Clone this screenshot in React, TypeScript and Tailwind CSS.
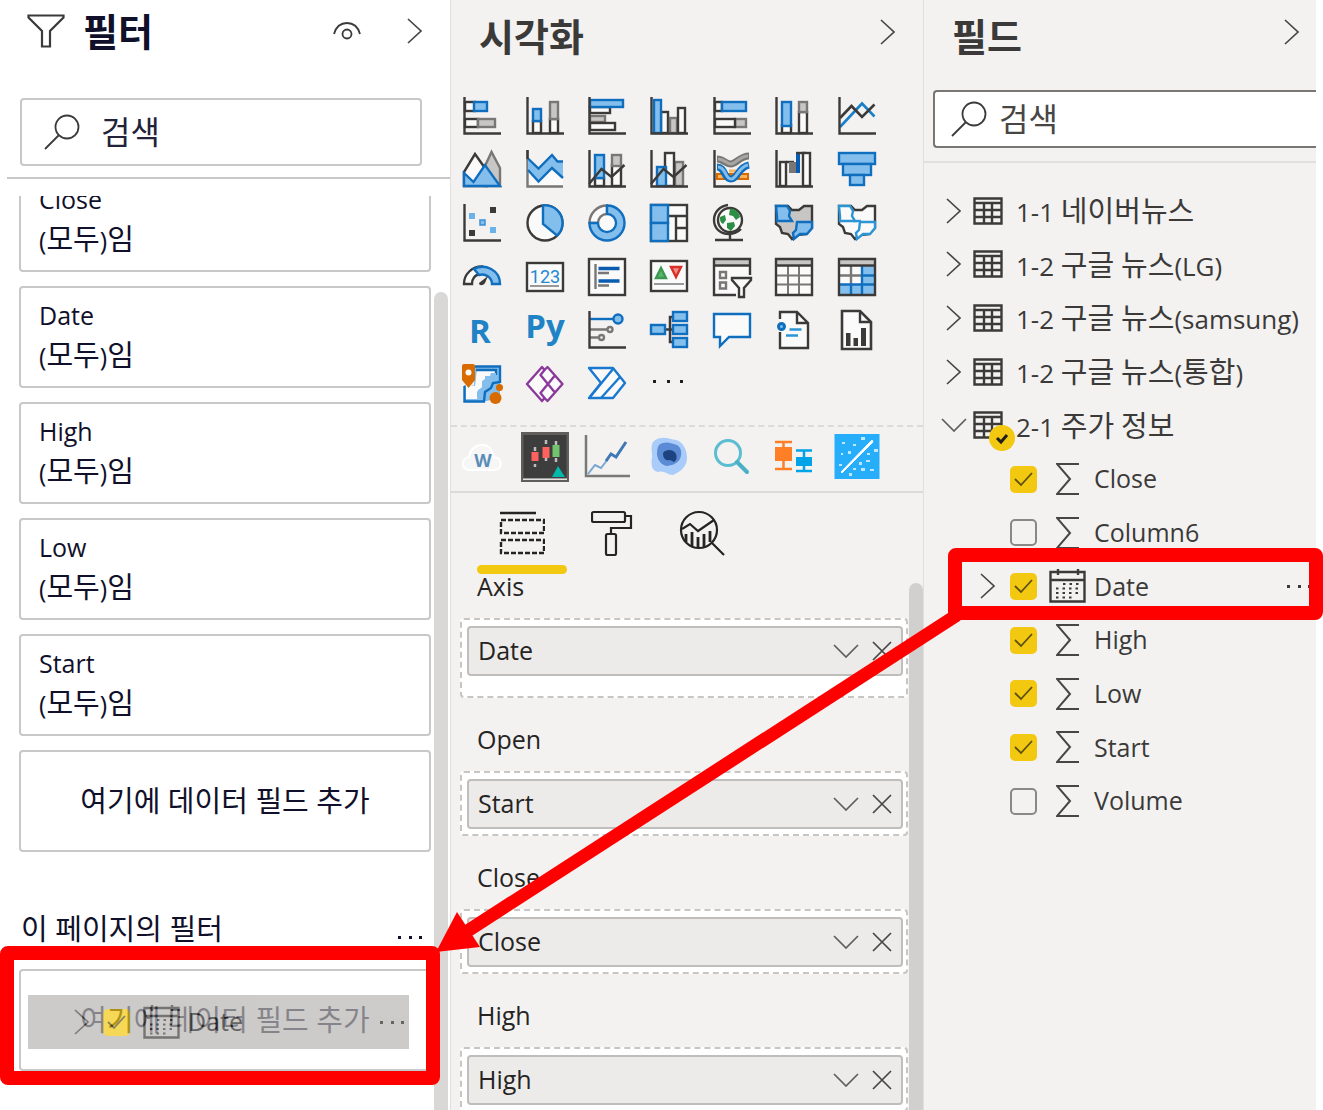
import React, { ReactNode } from 'react';

const DARK = '#3b3a39';
const GRAY = '#797775';
const GRAY_FILL = '#c8c6c4';
const BLUE = '#106ebe';
const BLUE_FILL = '#83beec';
const WHITE = '#fafafa';

interface IconProps {
  children?: ReactNode;
}

const Glyph = ({ children }: IconProps) => (
  <svg
    width="40"
    height="40"
    viewBox="0 0 40 40"
    fill="none"
    strokeWidth="2.400"
    aria-hidden="true"
    className="shrink-0 overflow-visible"
  >
    {children}
  </svg>
);

const Axis = () => <path d="M2.5 1v36.5H39" stroke={DARK} />;

interface BarProps {
  x: number;
  y: number;
  w: number;
  h: number;
  tone: 'blue' | 'gray' | 'white';
}

const tones = {
  blue: { stroke: BLUE, fill: BLUE_FILL },
  gray: { stroke: GRAY, fill: GRAY_FILL },
  white: { stroke: DARK, fill: WHITE },
};

const Bar = ({ x, y, w, h, tone }: BarProps) => <rect x={x} y={y} width={w} height={h} {...tones[tone]} />;

const visuals: { name: string; icon: ReactNode }[] = [
  {
    name: 'Stacked bar chart',
    icon: (
      <Glyph>
        <Bar x={3} y={6} w={10} h={9} tone="white" />
        <Bar x={12} y={6} w={13} h={9} tone="blue" />
        <Bar x={3} y={23} w={13} h={8} tone="white" />
        <Bar x={16} y={23} w={17} h={8} tone="gray" />
        <Axis />
      </Glyph>
    ),
  },
  {
    name: 'Stacked column chart',
    icon: (
      <Glyph>
        <Bar x={8} y={25} w={8} h={12} tone="white" />
        <Bar x={8} y={13} w={8} h={12} tone="blue" />
        <Bar x={25} y={23} w={8} h={14} tone="white" />
        <Bar x={25} y={6} w={8} h={17} tone="gray" />
        <Axis />
      </Glyph>
    ),
  },
  {
    name: 'Clustered bar chart',
    icon: (
      <Glyph>
        <Bar x={3} y={11} w={20} h={6} tone="white" />
        <Bar x={3} y={20} w={15} h={6} tone="gray" />
        <Bar x={3} y={27} w={25} h={7} tone="white" />
        <Bar x={3} y={4} w={33} h={7} tone="blue" />
        <Axis />
      </Glyph>
    ),
  },
  {
    name: 'Clustered column chart',
    icon: (
      <Glyph>
        <Bar x={12} y={16} w={7} h={21} tone="white" />
        <Bar x={21} y={22} w={7} h={15} tone="gray" />
        <Bar x={29} y={12} w={7} h={25} tone="white" />
        <Bar x={5} y={4} w={7} h={33} tone="blue" />
        <Axis />
      </Glyph>
    ),
  },
  {
    name: '100% stacked bar chart',
    icon: (
      <Glyph>
        <Bar x={3} y={6} w={7} h={9} tone="white" />
        <Bar x={10} y={6} w={24} h={9} tone="blue" />
        <Bar x={23} y={23} w={11} h={8} tone="gray" />
        <Bar x={3} y={23} w={20} h={8} tone="white" />
        <Axis />
      </Glyph>
    ),
  },
  {
    name: '100% stacked column chart',
    icon: (
      <Glyph>
        <Bar x={8} y={29} w={9} h={8} tone="white" />
        <Bar x={8} y={6} w={9} h={24} tone="blue" />
        <Bar x={25} y={16} w={8} h={21} tone="white" />
        <Bar x={25} y={6} w={8} h={10} tone="gray" />
        <Axis />
      </Glyph>
    ),
  },
  {
    name: 'Line chart',
    icon: (
      <Glyph>
        <path d="M3 31 25 7.5l12.500 13" stroke="#1a7fc9" strokeWidth="2.600" />
        <path d="m3 22 11.500-12L25 21 37.500 8.500" stroke={DARK} strokeWidth="2.600" />
        <Axis />
      </Glyph>
    ),
  },
  {
    name: 'Area chart',
    icon: (
      <Glyph>
        <path d="M2 37V23L13 5l12 17v15z" stroke={DARK} fill={WHITE} />
        <path d="M23 17 29.500 3 38 19v18H23z" stroke={GRAY} fill={GRAY_FILL} />
        <path d="M2 37V24l9.500 9L23 16l15 21z" stroke={BLUE} fill={BLUE_FILL} />
      </Glyph>
    ),
  },
  {
    name: 'Stacked area chart',
    icon: (
      <Glyph>
        <path d="M3 20v17h35V24z" fill={WHITE} />
        <path d="M2.500 1v36.500H38" stroke={GRAY} />
        <path d="M3 9.500l10.500 10L27 6l5.500 6.500H38V29L27 19 13.500 32.500 3 21z" fill={BLUE_FILL} />
        <path d="m3 9.500 10.500 10L27 6l5.500 6.500H38M38 29 27 19 13.500 32.500 3 21" stroke={BLUE} />
        <path d="M2.500 1v9" stroke={DARK} />
      </Glyph>
    ),
  },
  {
    name: 'Line and stacked column chart',
    icon: (
      <Glyph>
        <Bar x={8} y={29} w={9} h={8} tone="white" />
        <Bar x={8} y={6} w={9} h={23} tone="blue" />
        <Bar x={25} y={16} w={9} h={21} tone="white" />
        <Bar x={25} y={6} w={9} h={11} tone="gray" />
        <Axis />
        <path d="m2 35 12.500-15 10 8 13-12" stroke={DARK} />
      </Glyph>
    ),
  },
  {
    name: 'Line and clustered column chart',
    icon: (
      <Glyph>
        <Bar x={26} y={13} w={8} h={24} tone="gray" />
        <Bar x={16} y={4} w={9} h={33} tone="white" />
        <Bar x={8} y={18} w={9} h={19} tone="blue" />
        <Axis />
        <path d="m2 35 12.500-15 10 8 13-12" stroke={DARK} />
      </Glyph>
    ),
  },
  {
    name: 'Ribbon chart',
    icon: (
      <Glyph>
        <path d="M4 24h33v7H4z" fill="#d86b00" />
        <path d="M6 27.500h5M17 22h7M28 27.500h7" stroke="#ffb35c" strokeWidth="3" />
        <path d="M5 10c6 0 9 5 14 5s9-8 18-8" stroke={GRAY} strokeWidth="7" />
        <path d="M6 10c6 0 9 5 13 5s9-8 17-8" stroke="#a8a6a4" strokeWidth="3" />
        <path d="M5 18c8 0 7 12 14 12s7-12 18-14" stroke={BLUE} strokeWidth="7" />
        <path d="M6 18c8 0 7 12 13 12s7-12 17-14" stroke={BLUE_FILL} strokeWidth="3" />
        <Axis />
      </Glyph>
    ),
  },
  {
    name: 'Waterfall chart',
    icon: (
      <Glyph>
        <Bar x={6} y={13} w={6} h={24} tone="white" />
        <path d="M12 13h8" stroke={DARK} />
        <rect x="15" y="13" width="7" height="11" fill={GRAY} />
        <rect x="22" y="4" width="4" height="20" fill="#0a5cb0" />
        <path d="M22 4h10" stroke={DARK} />
        <Bar x={29} y={4} w={7} h={33} tone="white" />
        <Axis />
      </Glyph>
    ),
  },
  {
    name: 'Funnel',
    icon: (
      <Glyph>
        <Bar x={2} y={4} w={36} h={11} tone="blue" />
        <Bar x={6} y={15} w={28} h={11} tone="blue" />
        <Bar x={13} y={26} w={14} h={10} tone="blue" />
      </Glyph>
    ),
  },
  {
    name: 'Scatter chart',
    icon: (
      <Glyph>
        <path d="M2.500 1v36.500H39" stroke={DARK} />
        <path d="M28 4h6v6h-6zM7 27h6v6H7z" fill={DARK} />
        <path d="M7 10h6v6H7zM28 24h6v6h-6z" fill="#6cb3ec" />
        <path d="M18 17h5v5h-5z" fill={BLUE_FILL} stroke="#3a8fd6" strokeWidth="1.500" />
      </Glyph>
    ),
  },
  {
    name: 'Pie chart',
    icon: (
      <Glyph>
        <circle cx="20" cy="20" r="17.500" stroke={DARK} fill={WHITE} />
        <path d="M18 2.500c11-1 19.500 7 19.500 17.500 0 5-2 9.500-5.500 12.500L18 21z" stroke={BLUE} fill={BLUE_FILL} />
      </Glyph>
    ),
  },
  {
    name: 'Donut chart',
    icon: (
      <Glyph>
        <path d="M20 2.500A17.500 17.500 0 0 0 2.500 20H11a9 9 0 0 1 9-9z" stroke={GRAY} fill={WHITE} />
        <path d="M20 2.500A17.500 17.500 0 1 1 2.500 20H11a9 9 0 1 0 9-9z" stroke={BLUE} fill={BLUE_FILL} />
        <circle cx="20" cy="20" r="7.500" fill={WHITE} />
      </Glyph>
    ),
  },
  {
    name: 'Treemap',
    icon: (
      <Glyph>
        <rect x="2" y="2" width="36" height="36" stroke={DARK} fill={WHITE} />
        <path d="M19 13h19M27 13v25M27 25h11" stroke={DARK} />
        <Bar x={2} y={2} w={17} h={18} tone="blue" />
        <Bar x={2} y={20} w={17} h={18} tone="blue" />
      </Glyph>
    ),
  },
  {
    name: 'Map',
    icon: (
      <Glyph>
        <circle cx="18" cy="17" r="12" stroke={DARK} fill={WHITE} />
        <path d="M18 6c5-1 9 3 10 8l-4 3-3-4-4-1zM8 14l5-2 1 5-3 4c-3-2-3-4-3-7zM15 20l7-1 1 4-4 5-4-3z" fill="#2b8f45" />
        <path d="M16 2C8 3 2 9 2 17c0 9 7 14 15 14 5 0 9-2 12-5M18 32v5M3 37h28" stroke={DARK} />
      </Glyph>
    ),
  },
  {
    name: 'Filled map',
    icon: (
      <Glyph>
        <path d="M2 3h12l4 4h7l5-4h8v22l-6 6-9 1-5 4-4-5-6-1-2-6-4-3z" stroke={DARK} fill={GRAY_FILL} />
        <path d="M2 3h11l3 5-1 5 3 5H3V13z" stroke={BLUE} fill={BLUE_FILL} />
        <path d="M23 19h15v6l-5 6h-7l-6 5-1-6 3-3z" stroke={BLUE} fill={BLUE_FILL} />
      </Glyph>
    ),
  },
  {
    name: 'Shape map',
    icon: (
      <Glyph>
        <path d="M2 3h12l4 4h7l5-4h8v22l-6 6-9 1-5 4-4-5-6-1-2-6-4-3z" stroke={DARK} fill={WHITE} />
        <path d="M2 3h11l3 5-1 5 3 5H3V13z" stroke="#2b95d6" fill={WHITE} />
        <path d="M23 19h15v6l-5 6h-7l-6 5-1-6 3-3z" stroke="#2b95d6" fill={WHITE} />
        <path d="M16 18h8" stroke="#2b95d6" />
      </Glyph>
    ),
  },
  {
    name: 'Gauge',
    icon: (
      <Glyph>
        <path d="M2 27C2 17 10 9.500 20 9.500l-2 8c-5 0-8 4-8 9.500z" stroke={DARK} fill={WHITE} />
        <path d="M12 12c11-6 26 1 26 15h-8c0-6-6-11-13-9z" stroke={BLUE} fill={BLUE_FILL} />
        <path d="M17 26 26 19l-3 7c-2 3-6 3-6 0z" fill={DARK} />
      </Glyph>
    ),
  },
  {
    name: 'Card',
    icon: (
      <Glyph>
        <rect x="2" y="6" width="36" height="28" stroke={DARK} fill={WHITE} />
        <text x="20" y="26" fill="#2489d0" textAnchor="middle" className="font-[Roboto] text-[18px]">
          123
        </text>
        <path d="M5 29h29" stroke={GRAY} strokeWidth="1.500" />
      </Glyph>
    ),
  },
  {
    name: 'Multi-row card',
    icon: (
      <Glyph>
        <rect x="2" y="2" width="36" height="36" stroke={DARK} fill={WHITE} />
        <path d="M8.500 7v25M11 16h11M11 28.500h11" stroke={GRAY} />
        <path d="M11.500 11.500h21M11.500 24h21" stroke="#0a5cb0" strokeWidth="3.500" />
      </Glyph>
    ),
  },
  {
    name: 'KPI',
    icon: (
      <Glyph>
        <rect x="2" y="4" width="36" height="30" stroke={DARK} fill={WHITE} />
        <path d="m12 11 5 10H7z" fill="#5fb36d" stroke="#3c9a50" />
        <path d="m27 20-5-10h10z" fill="#f28b85" stroke="#d92f28" />
        <path d="M5 27h30" stroke={GRAY} strokeWidth="1.500" />
      </Glyph>
    ),
  },
  {
    name: 'Slicer',
    icon: (
      <Glyph>
        <path d="M2 2h36v15L24 38H2z" fill={WHITE} />
        <path d="M2 5h36" stroke={GRAY_FILL} strokeWidth="5" />
        <path d="M38 18V2H2v36h22M2 8.500h36" stroke={DARK} />
        <path d="M8 15h6v6H8zM8 25.500h6v6H8z" stroke={GRAY} />
        <path d="M20 21h19v2l-7 8v9h-5v-9l-7-8z" stroke={DARK} fill={WHITE} />
      </Glyph>
    ),
  },
  {
    name: 'Table',
    icon: (
      <Glyph>
        <rect x="2" y="2" width="36" height="36" fill={WHITE} />
        <path d="M2 5h36" stroke={GRAY_FILL} strokeWidth="5" />
        <path d="M14 9v29M25 9v29M2 18.500h36M2 27.500h36" stroke={GRAY} strokeWidth="2" />
        <path d="M2 2h36v36H2zM2 8.500h36" stroke={DARK} />
      </Glyph>
    ),
  },
  {
    name: 'Matrix',
    icon: (
      <Glyph>
        <rect x="2" y="2" width="36" height="36" fill={WHITE} />
        <path d="M2 5h36" stroke={GRAY_FILL} strokeWidth="5" />
        <path d="M14 9v18M2 18.500h23" stroke={GRAY} />
        <path d="M25 9h13v29H2V27.500h23z" fill={BLUE_FILL} />
        <path d="M25 9v29M14 27.500V38M2 27.500h36M25 18.500h13" stroke={BLUE} />
        <path d="M2 2h36v36H2zM2 8.500h36" stroke={DARK} />
      </Glyph>
    ),
  },
  {
    name: 'R script visual',
    icon: (
      <Glyph>
        <text x="18" y="33" fill="#1f83c5" textAnchor="middle" className="font-['Open_Sans'] text-[33px] font-bold">
          R
        </text>
      </Glyph>
    ),
  },
  {
    name: 'Python visual',
    icon: (
      <Glyph>
        <text x="20" y="28" fill="#1f83c5" textAnchor="middle" className="font-['Open_Sans'] text-[33px] font-bold">
          Py
        </text>
      </Glyph>
    ),
  },
  {
    name: 'Key influencers',
    icon: (
      <Glyph>
        <path d="M3 19.500h18M3 27.500h9" stroke={GRAY} />
        <circle cx="23" cy="19.500" r="2.500" stroke={GRAY} />
        <circle cx="14.500" cy="27.500" r="2.500" stroke={GRAY} />
        <path d="M3 9h23" stroke={BLUE} />
        <circle cx="31" cy="9" r="4.500" stroke={BLUE} fill={BLUE_FILL} />
        <Axis />
      </Glyph>
    ),
  },
  {
    name: 'Decomposition tree',
    icon: (
      <Glyph>
        <path d="M16 19.500h8M25 7h-4v25h4" stroke={DARK} strokeWidth="2.500" />
        <Bar x={2} y={15} w={14} h={9} tone="blue" />
        <Bar x={24} y={2} w={14} h={9} tone="blue" />
        <Bar x={24} y={15} w={14} h={9} tone="blue" />
        <Bar x={24} y={28} w={14} h={9} tone="blue" />
      </Glyph>
    ),
  },
  {
    name: 'Q&A',
    icon: (
      <Glyph>
        <path d="M2 4h36v23H17l-9 9v-9H2z" stroke={BLUE} fill={WHITE} />
      </Glyph>
    ),
  },
  {
    name: 'Smart narrative',
    icon: (
      <Glyph>
        <path d="M6 2h17l10 11v25H6z" fill={WHITE} />
        <path d="M6 9V2h17l11 11v25H6V22M23 2v11h11" stroke={DARK} />
        <circle cx="7.500" cy="16.500" r="3" stroke={BLUE} strokeWidth="3" fill={BLUE_FILL} />
        <path d="M15.500 19.500h12M12 25.500h12" stroke="#2b95d6" strokeWidth="2.500" />
      </Glyph>
    ),
  },
  {
    name: 'Paginated report',
    icon: (
      <Glyph>
        <path d="M5 1h18l11 11v27H5z" fill={WHITE} stroke={DARK} strokeWidth="2.600" />
        <path d="M23 1v11h11" stroke={DARK} />
        <path d="M9 23h4.500v13H9zM16.500 28H21v8h-4.500zM24 18h5v18h-5z" fill={DARK} />
      </Glyph>
    ),
  },
  {
    name: 'ArcGIS Maps',
    icon: (
      <Glyph>
        <path d="M13 3h25v30L25 37H2V21h10z" fill={BLUE_FILL} />
        <path d="M15 5h20v6l-6 1-6 2-1 9-6 3-1 9H4V20l9 2z" fill={WHITE} />
        <path d="M13 2.500h25V18l-7 1-2 5-6 4-1 9.500H2.500V22M14 6h20v5" stroke={BLUE} />
        <path d="M23 12h5l1-3h5v7l-5 2-3 5-6 4v6h-5v-5l5-5v-6l3-2z" fill={BLUE_FILL} />
        <path d="M0 2q0-2 2-2h9q2 0 2 2v14l-6.500 8L0 16z" fill="#d86b00" />
        <circle cx="6.500" cy="8.500" r="3" fill={WHITE} />
        <circle cx="33.500" cy="34" r="6" fill="#d86b00" />
        <circle cx="37.500" cy="23.500" r="3.500" fill="#d86b00" />
      </Glyph>
    ),
  },
  {
    name: 'Power Apps',
    icon: (
      <Glyph>
        <path
          d="m22.500 3 15 17-15 17-3-3-2.500 3L2 20 17 3l2.500 3z"
          stroke="#8b3a9c"
          fill={WHITE}
          strokeLinejoin="round"
        />
        <path
          d="m19.500 6-4 5 14 17M19.500 34l-4-5 14-17"
          stroke="#8b3a9c"
          strokeLinejoin="round"
        />
      </Glyph>
    ),
  },
  {
    name: 'Power Automate',
    icon: (
      <Glyph>
        <path d="M2 4h24l12 15-12 15H2l12-15z" stroke="#1a78d0" fill={WHITE} strokeLinejoin="round" />
        <path d="M26 5 3 33M33 13 14 34" stroke="#1a78d0" />
      </Glyph>
    ),
  },
  {
    name: 'More visuals',
    icon: (
      <Glyph>
        <path d="M4 16h3v3H4zM18 16h3v3h-3zM31 16h3v3h-3z" fill="#201f1e" />
      </Glyph>
    ),
  },
];

const LargeGlyph = ({ children }: IconProps) => (
  <svg width="50" height="50" viewBox="0 0 50 50" fill="none" aria-hidden="true" className="shrink-0">
    {children}
  </svg>
);

const customVisuals: { name: string; icon: ReactNode }[] = [
  {
    name: 'Word cloud',
    icon: (
      <LargeGlyph>
        <path d="M12 38c-8 0-8-12 0-13 1-8 8-13 14-12 6-1 10 7 11 12 9 1 9 13 0 13z" fill="#f6f6f6" stroke="#fff" strokeWidth="2" />
        <text x="26" y="35" fill="#5b8db8" textAnchor="middle" className="font-['Open_Sans'] text-[18px] font-bold">
          W
        </text>
      </LargeGlyph>
    ),
  },
  {
    name: 'Candlestick',
    icon: (
      <LargeGlyph>
        <path d="M1 0h48v50H1z" fill="#605e5c" />
        <path d="M3.500 3h43v43h-43z" fill="#3d3d3d" />
        <path d="M3 46.500h44v1.500H3z" fill="#e1dfdd" />
        <path d="M15 15v20M26 8v24M36 9v23" stroke="#bdbdbd" strokeWidth="2.500" strokeDasharray="4 13 4" />
        <path d="M11.500 20h7v9h-7zM22.500 15h7v11h-7z" fill="#fd625e" />
        <path d="M32.500 13h7v12h-7z" fill="#73c26d" />
        <path d="m38 34 7 11H32z" fill="#01b8aa" />
      </LargeGlyph>
    ),
  },
  {
    name: 'Line with forecast',
    icon: (
      <LargeGlyph>
        <path d="M4 3v41h44" stroke="#797979" strokeWidth="2.500" />
        <path d="m6 42 7-9 6 3 7-9" stroke="#7aa7d2" strokeWidth="2" />
        <path d="m24 29 5-7 5 3 10-15" stroke="#3f78b5" strokeWidth="3" />
      </LargeGlyph>
    ),
  },
  {
    name: 'Density map',
    icon: (
      <LargeGlyph>
        <path d="M10 9c7-6 16-2 22-1 8 2 11 11 11 18 0 9-7 14-14 17-6 0-9-5-15-3-7-1-7-9-6-15 0-6-2-12 2-16z" fill="#a9ccfa" />
        <path d="M15 13c7-5 13-1 18 0 5 3 5 9 3 14-4 6-9 6-13 7-6-1-9-6-10-11 0-4 0-7 2-10z" fill="#5b8bd5" />
        <path d="M19 21c4-5 11-3 13 1 1 3 1 6-2 8l-4-2c-4 1-7-1-7-7z" fill="#1d4480" />
      </LargeGlyph>
    ),
  },
  {
    name: 'Text filter',
    icon: (
      <LargeGlyph>
        <circle cx="21" cy="21" r="12.500" stroke="#5bbdd0" strokeWidth="3" />
        <path d="m30 30 10 10" stroke="#4ab0c5" strokeWidth="4" strokeLinecap="round" />
      </LargeGlyph>
    ),
  },
  {
    name: 'Box and whisker',
    icon: (
      <LargeGlyph>
        <path d="M6 10h17M14.500 10v27M6 37h17" stroke="#ff7f27" strokeWidth="2.500" />
        <path d="M6 15h17v14H6z" fill="#ff7f27" />
        <path d="M27 18.500h16M35 18v21M27 39h16" stroke="#00a2e8" strokeWidth="2.500" />
        <path d="M27 25h16v9H27z" fill="#00a2e8" />
      </LargeGlyph>
    ),
  },
  {
    name: 'Correlation',
    icon: (
      <LargeGlyph>
        <path d="M2.500 2h45v45h-45z" fill="#27aefb" />
        <path d="M9 40 40 8l1 2-31 31z" fill="#fff" stroke="#fff" strokeWidth="1" />
        <path
          d="M10 10h3v2h-3zM21 12h3v2h-3zM29 5h4v3h-4zM16 19h3v3h-3zM9 21h2v2H9zM42 17h4v3h-4zM35 21h3v2h-3zM34 28h4v2h-4zM27 30h3v3h-3zM7 32h3v2H7zM21 36h3v2h-3zM29 36h4v3h-4zM38 37h4v2h-4zM17 41h3v3h-3z"
          fill="#bfe7ff"
        />
      </LargeGlyph>
    ),
  },
];

const ChevronRight = () => (
  <svg width="16" height="26" viewBox="0 0 16 26" fill="none" stroke="#484644" strokeWidth="1.700" aria-hidden="true">
    <path d="m1 1 13 12L1 25" />
  </svg>
);

const ChevronDown = () => (
  <svg width="26" height="14" viewBox="0 0 26 14" fill="none" stroke="#605e5c" strokeWidth="1.700" aria-hidden="true">
    <path d="m1 1 12 12L25 1" />
  </svg>
);

const SearchIcon = () => (
  <svg
    width="36"
    height="36"
    viewBox="0 0 36 36"
    fill="none"
    stroke={DARK}
    strokeWidth="1.800"
    aria-hidden="true"
    className="shrink-0"
  >
    <circle cx="23" cy="13" r="11.500" />
    <path d="M15 21 1 35" />
  </svg>
);

const Dots = () => (
  <svg width="26" height="4" viewBox="0 0 26 4" fill="currentColor" aria-hidden="true">
    <path d="M1 1h3v3H1zM12 1h3v3h-3zM22 1h3v3h-3z" />
  </svg>
);

const TableIcon = () => (
  <svg width="30" height="28" viewBox="0 0 30 28" fill="none" stroke={DARK} strokeWidth="2.400" aria-hidden="true">
    <path d="M1.500 1.500h27v25h-27zM1.500 6h27M1.500 13h27M1.500 20h27M11 6v20M19 6v20" />
  </svg>
);

const SigmaIcon = () => (
  <svg width="24" height="34" viewBox="0 0 24 34" fill="none" stroke="#484644" strokeWidth="2" aria-hidden="true">
    <path d="M23 2H1l13 15L1 32h22" />
  </svg>
);

const CalendarIcon = () => (
  <svg width="37" height="34" viewBox="0 0 37 34" fill="none" stroke={DARK} strokeWidth="2.400" aria-hidden="true">
    <path d="M1.500 3h34v29.500h-34zM1.500 11h34M9 0v6M29 0v6" />
    <path d="M14 15h18M7 19.500h25M7 24h25M7 28.500h18" strokeWidth="2" strokeDasharray="2.500 4" />
  </svg>
);

// Hangul runs sit a step larger than the Latin ones beside them
const MixedText = ({ text }: { text: string }) => (
  <>
    {text.split(/([가-힣]+)/).map((part, i) =>
      /[가-힣]/.test(part) ? (
        <span key={i} className="text-[29px]">
          {part}
        </span>
      ) : (
        part
      ),
    )}
  </>
);

const CheckBox = ({ id, checked, label }: { id: string; checked: boolean; label?: string }) => (
  <span className="relative flex shrink-0">
    <input
      id={id}
      type="checkbox"
      aria-label={label}
      defaultChecked={checked}
      className="peer size-[27px] appearance-none rounded-[5px] border-2 border-[#8a8886] checked:border-[#f2c811] checked:bg-[#f2c811]"
    />
    <svg
      viewBox="0 0 27 27"
      fill="none"
      stroke="#5c5014"
      strokeWidth="1.800"
      aria-hidden="true"
      className="pointer-events-none absolute inset-0 hidden size-[27px] peer-checked:block"
    >
      <path d="m5 13 6 6L22 7" />
    </svg>
  </span>
);

const filterCards = ['Close', 'Date', 'High', 'Low', 'Start'];

const FiltersPane = () => (
  <section className="flex min-h-0 min-w-0 flex-col bg-white text-[#10102a]">
    <header className="flex h-[62px] shrink-0 items-center pr-[27px] pl-[27px]">
      <svg width="38" height="34" viewBox="0 0 38 34" fill="none" stroke={DARK} strokeWidth="2.200" aria-hidden="true">
        <path d="M1.500 1.500h35v2L23 17v15.500h-8V17L1.500 3.500z" />
      </svg>
      <h2 className="ml-[18px] flex-1 text-[38px] leading-[48px] font-bold">필터</h2>
      <button aria-label="미리 보기" className="mr-[46px]">
        <svg width="28" height="18" viewBox="0 0 28 18" fill="none" stroke={DARK} strokeWidth="1.800" aria-hidden="true">
          <path d="M1 12C3 5 8 1 14 1s11 4 13 11" />
          <circle cx="14" cy="12" r="4.500" />
        </svg>
      </button>
      <button aria-label="필터 축소">
        <ChevronRight />
      </button>
    </header>

    <label className="mt-9 mr-7 ml-5 flex h-[68px] shrink-0 items-center rounded border-2 border-[#c8c8c8] pl-[22px]">
      <SearchIcon />
      <input
        type="text"
        aria-label="필터 검색"
        placeholder="검색"
        className="ml-[21px] w-full min-w-0 text-[32px] leading-[48px] outline-none placeholder:text-[#22223a]"
      />
    </label>

    <div className="mt-[11px] ml-[7px] h-[2px] shrink-0 bg-[#c8c8c8]" />

    <div className="mt-[17px] flex min-h-0 flex-1 overflow-hidden">
      <div className="min-w-0 flex-1 pl-[19px]">
        <ul className="-mt-[26px] flex flex-col gap-[14px]">
          {filterCards.map((name) => (
            <li key={name} className="h-[102px] rounded border-2 border-[#c8c8c8] px-[18px] pt-2">
              <p className="text-[25px] leading-[39px]">{name}</p>
              <p className="text-[25px] leading-[39px]">
                <MixedText text="(모두)임" />
              </p>
            </li>
          ))}
          <li className="flex h-[102px] items-center justify-center rounded border-2 border-[#c8c8c8] text-[29px]">
            여기에 데이터 필드 추가
          </li>
        </ul>
        <div className="mt-[54px] flex h-[46px] items-center justify-between pr-2">
          <h3 className="pl-[2px] text-[29px]">이 페이지의 필터</h3>
          <button aria-label="기타 옵션" className="mt-4">
            <Dots />
          </button>
        </div>
        <div className="relative mt-[17px] flex h-[102px] items-center justify-center rounded border-2 border-[#c8c8c8] text-[29px]">
          여기에 데이터 필드 추가
          {/* row being dragged in from the field list */}
          <div className="absolute top-6 right-5 left-[7px] flex h-[54px] items-center bg-[#b8b6b4] pl-[46px] text-[25px] text-[#252423] opacity-70">
            <ChevronRight />
            <span className="ml-[13px]">
              <CheckBox id="drag-date" checked label="Date" />
            </span>
            <span className="ml-[13px]">
              <CalendarIcon />
            </span>
            <span className="ml-2 flex-1">Date</span>
            <span className="mr-1">
              <Dots />
            </span>
          </div>
          <div className="pointer-events-none absolute -top-[25px] -right-[11px] -bottom-4 -left-[21px] rounded-lg border-[14px] border-[#ff0000]" />
        </div>
      </div>
      <div className="ml-[3px] mt-24 mr-[2px] w-[14px] rounded-t-full bg-[#d9d8d7]" />
    </div>
  </section>
);

const wells = [
  { label: 'Axis', field: 'Date', multi: true },
  { label: 'Open', field: 'Start', multi: false },
  { label: 'Close', field: 'Close', multi: false },
  { label: 'High', field: 'High', multi: false },
];

const VisualizationsPane = () => (
  <section className="flex min-h-0 min-w-0 flex-col border-x border-[#e1dfdd] bg-[#f3f2f1] text-[#252423]">
    <header className="flex h-[72px] shrink-0 items-center justify-between pr-[27px] pl-7">
      <h2 className="text-[38px] leading-[48px] font-bold text-[#3b3a39]">시각화</h2>
      <button aria-label="시각화 축소" className="mb-2">
        <ChevronRight />
      </button>
    </header>

    <div className="mt-[17px] mr-[35px] grid h-[322px] shrink-0 grid-cols-7 grid-rows-6">
      {visuals.map(({ name, icon }) => (
        <button key={name} aria-label={name} className="flex items-center justify-center">
          {icon}
        </button>
      ))}
    </div>

    <div className="mt-[14px] shrink-0 border-t-2 border-dashed border-[#dddbd9]" />
    <div className="grid h-[64px] shrink-0 grid-cols-7 pr-[35px] pb-1">
      {customVisuals.map(({ name, icon }) => (
        <button key={name} aria-label={name} className="flex items-center justify-center">
          {icon}
        </button>
      ))}
    </div>
    <div className="h-[2px] shrink-0 bg-[#dddbd9]" />

    <div className="flex h-[81px] shrink-0 pl-[26px]">
      <button aria-label="필드" className="flex w-[90px] flex-col items-center justify-between pt-[17px]">
        <svg width="46" height="46" viewBox="0 0 46 46" fill="none" stroke="#252423" strokeWidth="2.400" aria-hidden="true">
          <path d="M1 3h36" />
          <path d="M2 10h43v13H2zM2 30h43v13H2z" strokeDasharray="5 2" />
        </svg>
        <span className="h-[9px] w-full rounded-full bg-[#f2c811]" />
      </button>
      <button aria-label="서식" className="flex w-[90px] flex-col items-center pt-[17px]">
        <svg width="42" height="46" viewBox="0 0 42 46" fill="none" stroke="#252423" strokeWidth="2.200" aria-hidden="true">
          <rect x="1" y="2" width="33" height="10" rx="1.500" />
          <path d="M34 6h6v12H20v6" />
          <rect x="15" y="24" width="10" height="21" rx="1.500" />
        </svg>
      </button>
      <button aria-label="분석" className="flex w-[90px] flex-col items-center pt-[17px]">
        <svg width="46" height="46" viewBox="0 0 46 46" fill="none" stroke="#252423" strokeWidth="2.200" aria-hidden="true">
          <circle cx="20" cy="20" r="18" />
          <path d="m33 33 12 12M3 19l8-5 8 7L35 10" />
          <path d="M7 24v8M13 22v14M19 27v11M25 24v13M31 21v11" strokeWidth="2.800" />
        </svg>
      </button>
    </div>

    <div className="flex min-h-0 flex-1 overflow-hidden">
      <div className="min-w-0 flex-1 pl-[9px]">
        {wells.map(({ label, field, multi }) => (
          <div key={label} className="mb-[29px]">
            <h3 className="mb-5 pl-[17px] text-[25px] leading-6">{label}</h3>
            <div
              className={`rounded border-2 border-dashed border-[#c8c6c4] bg-white px-[5px] pt-[6px] ${
                multi ? 'pb-5' : 'pb-[5px]'
              }`}
            >
              <div className="-mr-[2px] flex h-[50px] items-center rounded border-2 border-[#c0bebc] bg-[#edebe9] pr-[9px] pl-[9px]">
                <span className="flex-1 text-[25px]">{field}</span>
                <button aria-label={`${field} 메뉴`}>
                  <ChevronDown />
                </button>
                <button aria-label={`${field} 제거`} className="ml-[13px]">
                  <svg width="20" height="20" viewBox="0 0 20 20" stroke="#484644" strokeWidth="1.700" aria-hidden="true">
                    <path d="m1 1 18 18M19 1 1 19" />
                  </svg>
                </button>
              </div>
            </div>
          </div>
        ))}
      </div>
      <div className="mt-[9px] ml-px w-[14px] rounded-t-full bg-[#d2d0ce]" />
    </div>
  </section>
);

const tables = ['1-1 네이버뉴스', '1-2 구글 뉴스(LG)', '1-2 구글 뉴스(samsung)', '1-2 구글 뉴스(통합)'];

const fields = [
  { name: 'Close', checked: true },
  { name: 'Column6', checked: false },
  { name: 'Date', checked: true },
  { name: 'High', checked: true },
  { name: 'Low', checked: true },
  { name: 'Start', checked: true },
  { name: 'Volume', checked: false },
];

const FieldsPane = () => (
  <section className="min-w-0 bg-white pr-[7px] text-[#3b3a39]">
    <div className="h-full bg-[#f3f2f1]">
      <header className="flex h-[72px] items-center justify-between pr-4 pl-[28px]">
        <h2 className="text-[38px] leading-[48px] font-bold">필드</h2>
        <button aria-label="필드 축소" className="mb-2">
          <ChevronRight />
        </button>
      </header>

      <label className="mt-[18px] ml-[9px] flex h-[58px] items-center rounded-l border-2 border-r-0 border-[#797775] bg-white pl-[16px]">
        <SearchIcon />
        <input
          type="text"
          aria-label="필드 검색"
          placeholder="검색"
          className="ml-[12px] w-full min-w-0 text-[32px] leading-[48px] outline-none placeholder:text-[#484644]"
        />
      </label>

      <div className="mt-[13px] h-[2px] bg-[#e1dfdd]" />

      <ul className="mt-[21px] grid h-[644px] grid-rows-12 text-[25px]">
        {tables.map((name) => (
          <li key={name} className="flex items-center pl-[22px]">
            <button aria-label={`${name} 확장`}>
              <ChevronRight />
            </button>
            <span className="mr-[13px] ml-[11px]">
              <TableIcon />
            </span>
            <span className="text-[26px] whitespace-nowrap">
              <MixedText text={name} />
            </span>
          </li>
        ))}
        <li className="flex items-center pl-[17px]">
          <button aria-label="2-1 주가 정보 축소">
            <ChevronDown />
          </button>
          <span className="relative mr-[13px] ml-[6px]">
            <TableIcon />
            <svg width="26" height="26" viewBox="0 0 26 26" aria-hidden="true" className="absolute top-[14px] left-[16px]">
              <circle cx="13" cy="13" r="13" fill="#f2c811" />
              <path d="m8 13 4 4 6-7" fill="none" stroke="#201f1e" strokeWidth="3" />
            </svg>
          </span>
          <span className="text-[26px] whitespace-nowrap">
            <MixedText text="2-1 주가 정보" />
          </span>
        </li>
        {fields.map(({ name, checked }) => {
          const isDate = name === 'Date';
          return (
            <li key={name} className={`relative flex items-center ${isDate ? 'pl-[56px]' : 'pl-[86px]'}`}>
              {isDate && (
                <button aria-label="Date 확장" className="mr-[14px]">
                  <ChevronRight />
                </button>
              )}
              <CheckBox id={`field-${name}`} checked={checked} />
              <span className="mr-2 ml-[12px] flex w-[37px] justify-center">
                {isDate ? <CalendarIcon /> : <SigmaIcon />}
              </span>
              <label htmlFor={`field-${name}`} className="flex-1">
                {name}
              </label>
              {isDate && (
                <>
                  <button aria-label="Date 기타 옵션" className="mr-1">
                    <Dots />
                  </button>
                  <div className="pointer-events-none absolute -top-3 -right-[7px] -bottom-[7px] left-6 rounded-lg border-[14px] border-[#ff0000]" />
                </>
              )}
            </li>
          );
        })}
      </ul>
    </div>
  </section>
);

export default function App() {
  return (
    <main className="relative grid h-screen grid-cols-[450fr_474fr_399fr] grid-rows-1 overflow-hidden font-['Open_Sans','Noto_Sans_CJK_KR',sans-serif]">
      <FiltersPane />
      <VisualizationsPane />
      <FieldsPane />
      <svg
        viewBox="0 0 1323 1110"
        preserveAspectRatio="none"
        aria-hidden="true"
        className="pointer-events-none absolute inset-0 size-full"
      >
        <path d="M957 615 466 932" stroke="#ff0000" strokeWidth="13" />
        <path d="m436 952 21-40 23 35z" fill="#ff0000" />
      </svg>
    </main>
  );
}
